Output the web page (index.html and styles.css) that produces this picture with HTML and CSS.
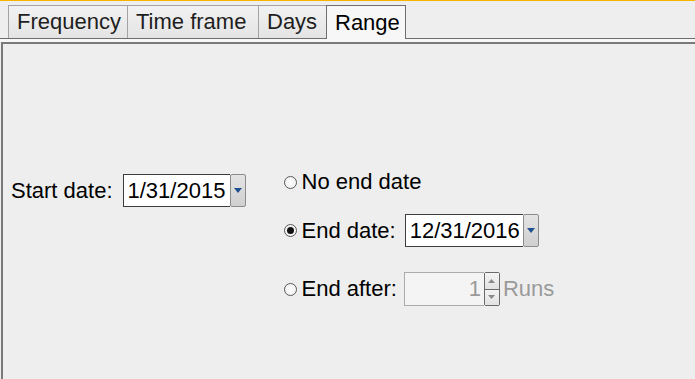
FILE: index.html
```html
<!DOCTYPE html>
<html>
<head>
<meta charset="utf-8">
<link rel="stylesheet" href="styles.css">
</head>
<body>
<div class="topline"></div>
<div class="tabbar">
  <div class="tab">Frequency</div>
  <div class="tab">Time frame</div>
  <div class="tab">Days</div>
  <div class="tab active">Range</div>
</div>
<div class="strip"></div>
<div class="panel">
  <div class="content">
    <div class="start">
      <span class="label">Start date:</span>
      <div class="combo">
        <span class="field">1/31/2015</span>
        <span class="drop"><svg width="8" height="5" viewBox="0 0 8 5"><path d="M0 0H8L4 5Z" fill="#1f4f8f"/></svg></span>
      </div>
    </div>
    <div class="options">
      <div class="opt row1"><span class="radio"></span><span class="label">No end date</span></div>
      <div class="opt row2"><span class="radio checked"></span><span class="label">End date:</span>
        <div class="combo combo-end">
          <span class="field">12/31/2016</span>
          <span class="drop"><svg width="8" height="5" viewBox="0 0 8 5"><path d="M0 0H8L4 5Z" fill="#1f4f8f"/></svg></span>
        </div>
      </div>
      <div class="opt row3"><span class="radio"></span><span class="label">End after:</span>
        <div class="spin">
          <span class="spinfield">1</span>
          <span class="spinbtns">
            <span class="sbtn"><svg width="7" height="4" viewBox="0 0 7 4"><path d="M0 4H7L3.5 0Z" fill="#8a8a8a"/></svg></span>
            <span class="sbtn"><svg width="7" height="4" viewBox="0 0 7 4"><path d="M0 0H7L3.5 4Z" fill="#8a8a8a"/></svg></span>
          </span>
        </div>
        <span class="runs">Runs</span>
      </div>
    </div>
  </div>
</div>
</body>
</html>
```
FILE: styles.css
```css
html, body {
  margin: 0;
  padding: 0;
  background: #eeeeee;
  width: 695px;
  height: 379px;
  overflow: hidden;
  font-family: "Liberation Sans", Arial, sans-serif;
  font-size: 22px;
  color: #000;
}
.topline {
  height: 1px;
  background: #f5b400;
}
.tabbar {
  display: flex;
  margin-top: 4px;
  padding-left: 8px;
  height: 33px;
  border-bottom: 1px solid #6e6e6e;
  align-items: stretch;
}
.tab {
  box-sizing: border-box;
  border: 1px solid #a3a3a3;
  border-bottom: none;
  margin-right: -1px;
  background: linear-gradient(#f2f2f2, #e4e4e4);
  color: #1e1e1e;
  padding: 0 0 0 8px;
  display: flex;
  align-items: center;
  line-height: 1;
  white-space: nowrap;
  overflow: hidden;
}
.tab:nth-child(1) { width: 120px; }
.tab:nth-child(2) { width: 132px; }
.tab:nth-child(3) { width: 69px; }
.tab.active {
  width: 80px;
  border-color: #6e6e6e;
  background: #f7f7f7;
  color: #000;
  margin-bottom: -1px;
  position: relative;
  z-index: 1;
}
.strip {
  height: 3px;
  background: #f7f7f7;
}
.panel {
  margin-left: 1px;
  border-top: 2px solid #7a7a7a;
  border-left: 2px solid #7a7a7a;
  height: 340px;
  box-sizing: border-box;
}
.content {
  display: flex;
  align-items: flex-start;
  padding-top: 126px;
  padding-left: 8px;
}
.start {
  display: flex;
  align-items: center;
  margin-top: 4px;
}
.start .label {
  margin-right: 10px;
}
.combo {
  display: flex;
  height: 33px;
}
.field {
  box-sizing: border-box;
  height: 33px;
  width: 107px;
  background: #fff;
  border: 1px solid #3c3c3c;
  border-right: none;
  padding-left: 4px;
  display: flex;
  align-items: center;
}
.drop {
  box-sizing: border-box;
  width: 16px;
  height: 33px;
  border: 1px solid #8c8c8c;
  border-radius: 2px;
  background: linear-gradient(#e4e4e4, #cfcfcf);
  display: flex;
  align-items: center;
  justify-content: center;
}
.options {
  margin-left: 38px;
  display: flex;
  flex-direction: column;
}
.opt {
  display: flex;
  align-items: center;
}
.row1 { height: 24px; }
.row2 { margin-top: 20px; }
.row3 { margin-top: 25px; }
.radio {
  box-sizing: border-box;
  width: 13px;
  height: 13px;
  border-radius: 50%;
  border: 1px solid #5a5a5a;
  background: radial-gradient(#ffffff, #ececec);
  margin-right: 5px;
  display: flex;
  align-items: center;
  justify-content: center;
}
.radio.checked::after {
  content: "";
  width: 7px;
  height: 7px;
  border-radius: 50%;
  background: #111;
}
.combo-end {
  margin-left: 9px;
}
.combo-end .field {
  width: 118px;
}
.spin {
  display: flex;
  margin-left: 7px;
  height: 34px;
}
.spinfield {
  box-sizing: border-box;
  width: 80px;
  height: 34px;
  background: #f4f4f4;
  border: 1px solid #ababab;
  border-right: none;
  color: #9a9a9a;
  display: flex;
  align-items: center;
  justify-content: flex-end;
  padding-right: 3px;
}
.spinbtns {
  display: flex;
  flex-direction: column;
  width: 16px;
  height: 34px;
  box-sizing: border-box;
  border: 1px solid #6a6a6a;
  border-radius: 2px;
}
.sbtn {
  flex: 1;
  background: linear-gradient(#f4f4f4, #e2e2e2);
  display: flex;
  align-items: center;
  justify-content: center;
}
.sbtn + .sbtn {
  border-top: 1px solid #6a6a6a;
}
.runs {
  color: #9a9a9a;
  margin-left: 3px;
}
```
